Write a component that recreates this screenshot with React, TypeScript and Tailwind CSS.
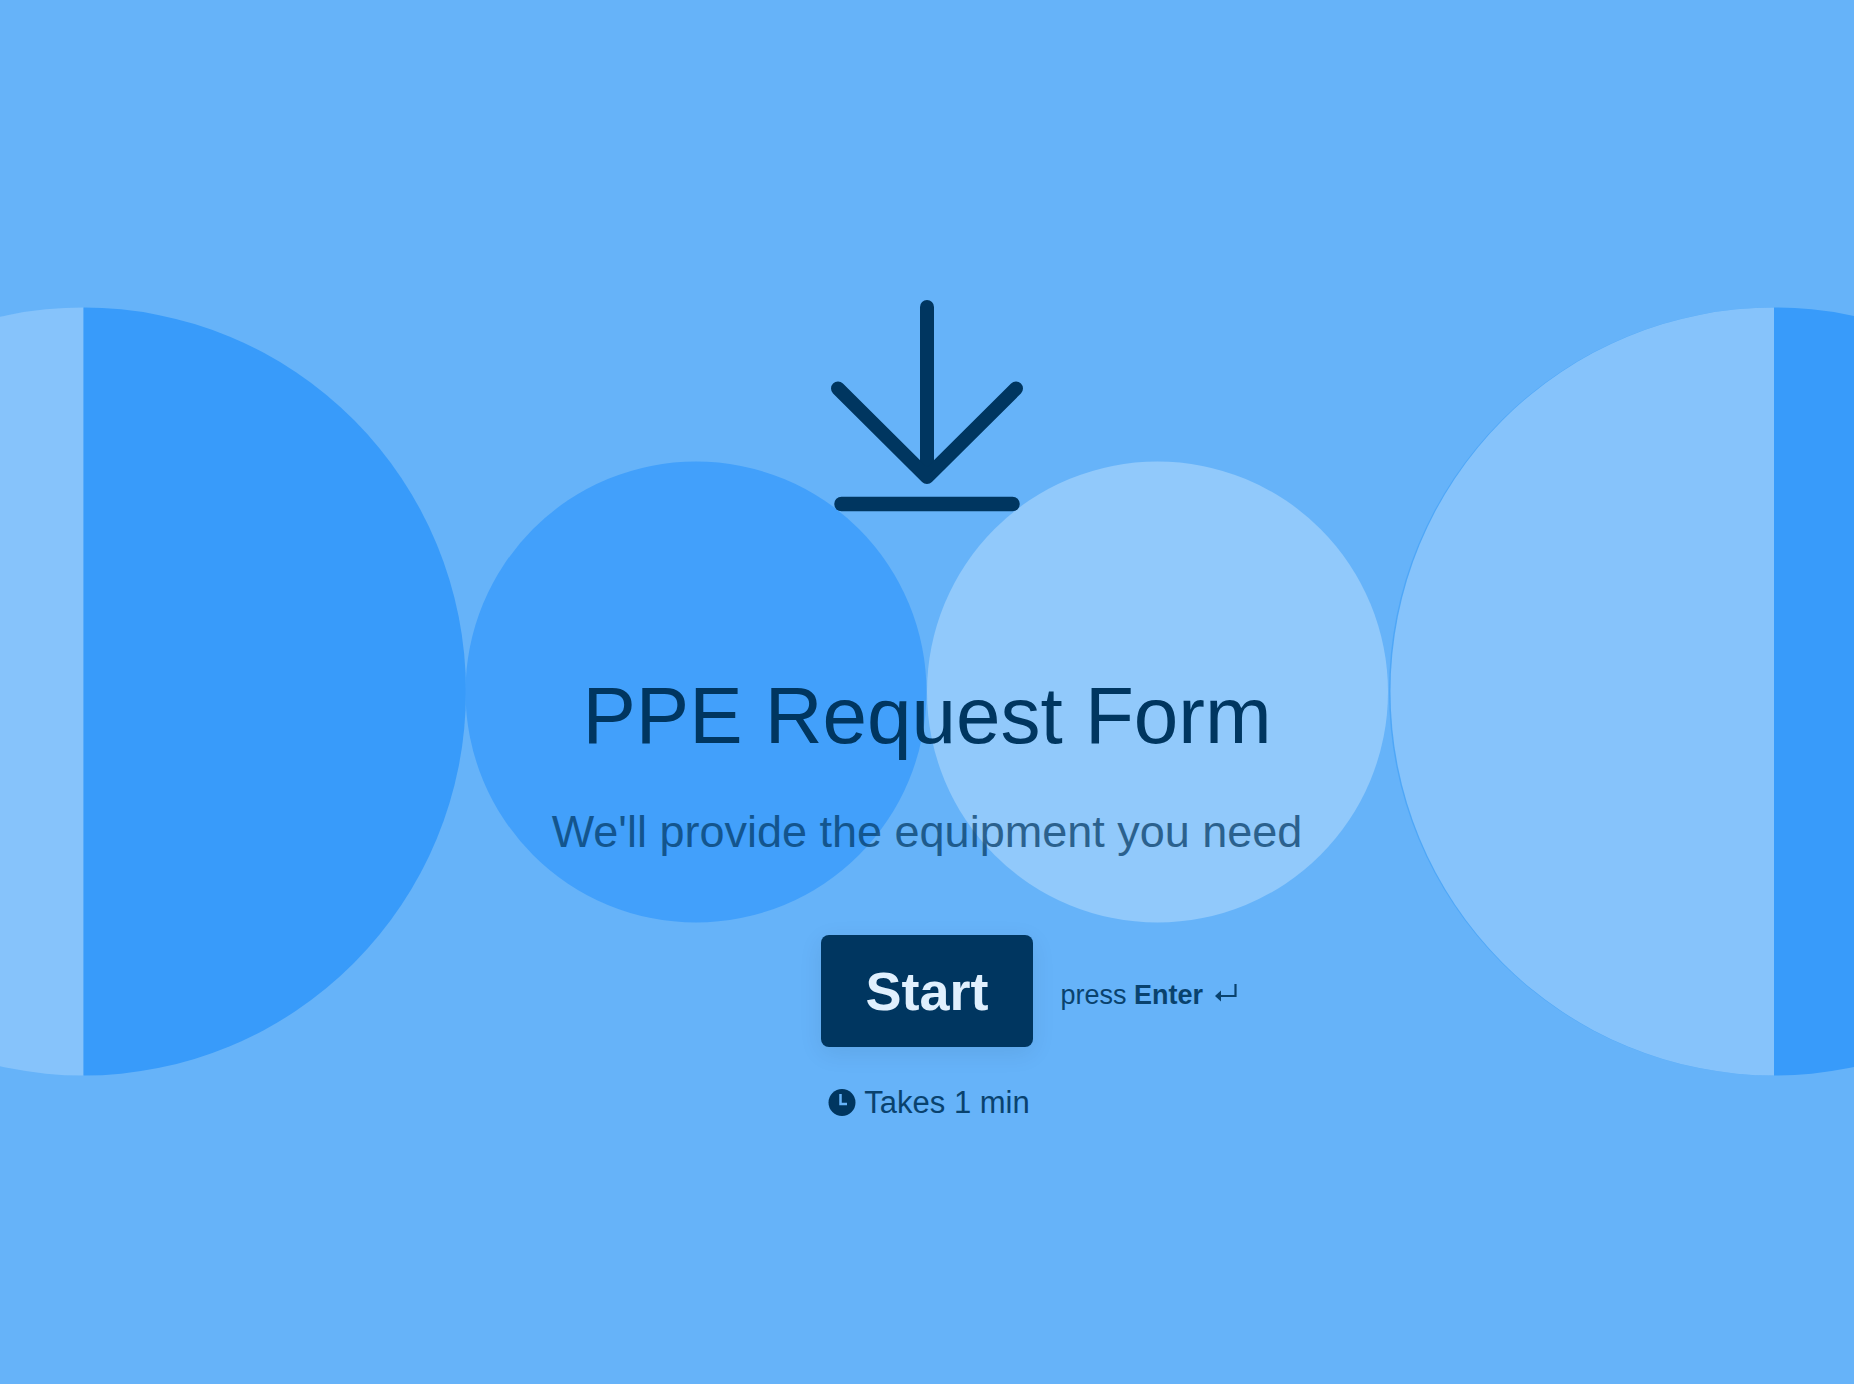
import { useEffect } from "react";

function Backdrop() {
  return (
    <svg
      className="absolute inset-0 h-full w-full"
      viewBox="0 0 1854 1384"
      preserveAspectRatio="xMidYMid slice"
      aria-hidden="true"
    >
      <path d="M83.500 307.500A384 384 0 0 0 83.500 1075.500Z" fill="#86c3fb" />
      <path d="M83.500 307.500A382.500 384 0 0 1 83.500 1075.500Z" fill="#389bfa" />
      <circle cx="696" cy="692" r="230.500" fill="#42a0fb" />
      <circle cx="1157.500" cy="692" r="230.500" fill="#91c9fb" />
      <path d="M1774 307.500A385 384 0 0 0 1774 1075.500Z" fill="#4fa7f7" />
      <path d="M1774 307.500A384 384 0 0 1 1774 1075.500Z" fill="#389bfa" />
      <path d="M1774 307.500A383.500 384 0 0 0 1774 1075.500Z" fill="#86c3fb" />
    </svg>
  );
}

function DownloadArrow() {
  return (
    <svg
      className="h-[212px] w-[192px]"
      viewBox="0 0 192 212"
      fill="none"
      stroke="currentColor"
      strokeWidth="14"
      strokeLinecap="round"
      strokeLinejoin="round"
      aria-hidden="true"
    >
      <path d="M96 7V176" />
      <path d="M7 88.500L96 177L185 88.500" />
      <path d="M10.500 204H181.500" strokeWidth="14.500" />
    </svg>
  );
}

function ClockIcon() {
  return (
    <svg className="size-7" viewBox="0 0 28 28" aria-hidden="true">
      <circle cx="14" cy="13.500" r="13.500" fill="currentColor" />
      <path d="M12.500 5V15H19" fill="none" stroke="#66b3f9" strokeWidth="2.500" />
    </svg>
  );
}

function ReturnIcon() {
  return (
    <svg className="mb-1 h-[18px] w-[22px]" viewBox="0 0 22 18" aria-hidden="true">
      <path d="M20.500 0V12H5" fill="none" stroke="currentColor" strokeWidth="2.200" />
      <path d="M0 12L6 6.500V17.500Z" fill="currentColor" />
    </svg>
  );
}

export default function App() {
  const start = () => {};

  useEffect(() => {
    const onKey = (e: KeyboardEvent) => {
      if (e.key === "Enter") start();
    };
    window.addEventListener("keydown", onKey);
    return () => window.removeEventListener("keydown", onKey);
  }, []);

  return (
    <div className="relative min-h-screen overflow-hidden bg-[#66b3f9] font-['Liberation_Sans',Arial,sans-serif] text-[#003660]">
      <Backdrop />
      <main className="relative flex min-h-screen flex-col items-center justify-center pt-[38px]">
        <DownloadArrow />
        <h1 className="mt-[156px] text-center text-[80px] leading-[96px]">PPE Request Form</h1>
        <p className="mt-10 text-center text-[45px] leading-[56px] opacity-70">
          We'll provide the equipment you need
        </p>
        <div className="mt-[75px] grid w-full grid-cols-[1fr_auto_1fr] items-center">
          <button
            type="button"
            onClick={start}
            className="col-start-2 h-28 cursor-pointer rounded-lg bg-[#003660] px-11 text-[54px] leading-none font-bold text-[#e0f0fe] shadow-[0_6px_24px_rgba(0,0,0,0.08)]"
          >
            Start
          </button>
          <div className="flex items-center gap-3 pt-2 pl-7 text-[27px] leading-8 opacity-90">
            <span>
              press <strong>Enter</strong>
            </span>
            <ReturnIcon />
          </div>
        </div>
        <div className="mt-9 flex items-center gap-2 pl-1 text-[31px] leading-10">
          <ClockIcon />
          <span className="opacity-90">Takes 1 min</span>
        </div>
      </main>
    </div>
  );
}
